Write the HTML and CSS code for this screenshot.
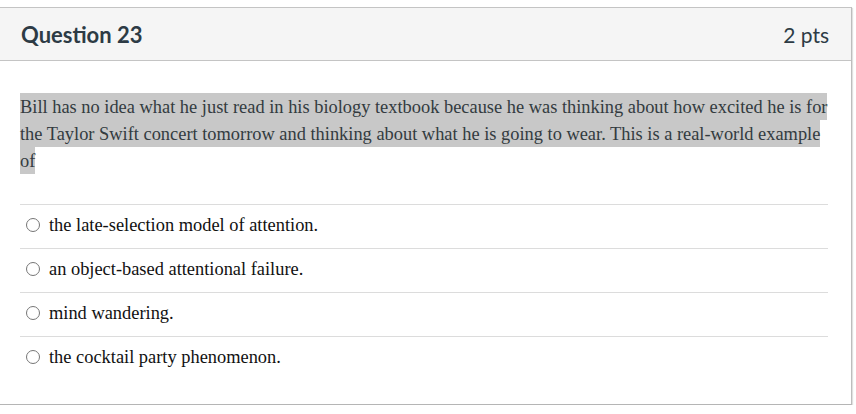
FILE: index.html
```html
<!DOCTYPE html>
<html>
<head>
<meta charset="utf-8">
<link rel="stylesheet" href="styles.css">
</head>
<body>
<div class="panel">
  <div class="header">
    <span class="title">Question 23</span>
    <span class="pts">2 pts</span>
  </div>
  <div class="body">
    <div class="qtext"><span class="sel">Bill has no idea what he just read in his biology textbook because he was thinking about how excited he is for the Taylor Swift concert tomorrow and thinking about what he is going to wear. This is a real-world example of</span></div>
    <div class="answers">
      <label class="answer"><input type="radio" name="q23" class="radio"><span>the late-selection model of attention.</span></label>
      <label class="answer"><input type="radio" name="q23" class="radio"><span>an object-based attentional failure.</span></label>
      <label class="answer"><input type="radio" name="q23" class="radio"><span>mind wandering.</span></label>
      <label class="answer"><input type="radio" name="q23" class="radio"><span>the cocktail party phenomenon.</span></label>
    </div>
  </div>
</div>
</body>
</html>
```
FILE: styles.css
```css
html, body {
  margin: 0;
  padding: 0;
  background: #ffffff;
}
body {
  padding-top: 7px;
}
.panel {
  margin: 0 4px 0 -1px;
  border: 1px solid #c4c4c4;
  border-right-color: #bdbdbd;
  border-bottom-color: #b5b5b5;
  box-shadow: 1px 1px 1px rgba(0,0,0,0.12);
  background: #fff;
  height: 398px;
  box-sizing: border-box;
}
.header {
  height: 52px;
  background: #f5f5f5;
  border-bottom: 1px solid #c4c4c4;
  display: flex;
  align-items: center;
  justify-content: space-between;
  padding: 0 22px 0 21px;
  font-family: Lato, "Liberation Sans", sans-serif;
  color: #2d3b45;
}
.title {
  font-size: 22px;
  font-weight: bold;
}
.pts {
  font-size: 21px;
  font-weight: normal;
}
.body {
  padding: 33px 23px 0 20px;
  font-family: "Liberation Serif", "Times New Roman", serif;
  font-size: 18.4px;
  color: #333b40;
}
.qtext {
  line-height: 27px;
}
.sel {
  background: #c8c8c8;
  padding: 4px 0 3px;
}
.answers {
  margin-top: 29px;
}
.answer {
  display: flex;
  align-items: center;
  height: 44px;
  border-top: 1px solid #dcdcdc;
  box-sizing: border-box;
  color: #111;
  padding-bottom: 3px;
}
.radio {
  margin: 0 9px 0 6px;
  width: 14px;
  height: 14px;
}
```
